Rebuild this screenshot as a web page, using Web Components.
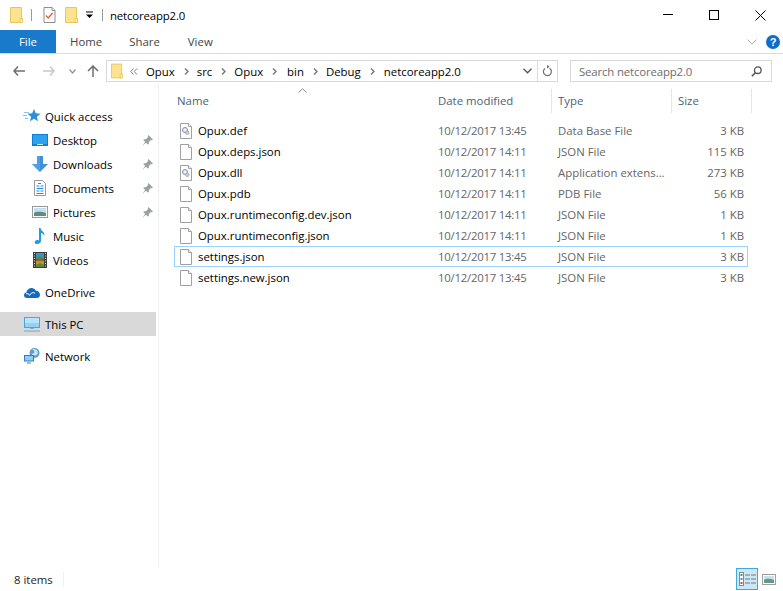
<!DOCTYPE html>
<html>
<head>
<meta charset="utf-8">
<title>netcoreapp2.0</title>
<style>
  html, body { margin: 0; padding: 0; background: #fff; }
  body { font: 11.4px "Open Sans", "Noto Sans", sans-serif; color: #000; overflow: hidden; }
</style>
</head>
<body>
<explorer-window></explorer-window>

<script>
// all the icons in one place, shadow roots just look them up by name
const folderIcon = (w, h) => `<svg width="${w}" height="${h}" viewBox="0 0 13 16"><path d="M.5.5h11v15H.5z" fill="#fde28f" stroke="#e9c65c"/><path d="M10 11.500h2.500v4H10z" fill="#fff3c9" stroke="#e9c65c"/></svg>`;
const pageBase = '<path d="M.5.5h8l3 3v12H.5z" fill="#fff" stroke="#a0a0a0"/><path d="M8.500.5v3h3" fill="#f4f4f4" stroke="#a0a0a0"/>';
const icons = {
  folder: folderIcon(13, 16),
  check: `<svg width="13" height="16" viewBox="0 0 12 16"><path d="M.5.5h8l3 3v12H.5z" fill="#fff" stroke="#8c8c8c"/><path d="M8.500.5v3h3" fill="#eee" stroke="#8c8c8c"/><path d="M2.500 8.500l2.200 2.500 4.500-5" fill="none" stroke="#e2622e" stroke-width="1.400"/></svg>`,
  page: `<svg width="12" height="16" viewBox="0 0 12 16">${pageBase}</svg>`,
  gear: `<svg width="12" height="16" viewBox="0 0 12 16">${pageBase}<circle cx="5" cy="7" r="2.600" fill="#d4dae0" stroke="#94a0ac"/><circle cx="5" cy="7" r=".9" fill="#fff"/><circle cx="7.300" cy="9.800" r="1.800" fill="#c8d0d8" stroke="#94a0ac" stroke-width=".7"/></svg>`,
  star: `<svg width="18" height="16" viewBox="0 0 18 16"><path d="M1 4.500h5M0 7.500h4M2 10.500h3" stroke="#8cc4ee" stroke-width="1"/><path d="M11 1l1.800 4.300 4.700.4-3.600 3 1.100 4.600-4-2.500-4 2.500 1.100-4.600-3.600-3 4.700-.4z" fill="#2b8fdc"/></svg>`,
  desktop: `<svg width="16" height="12" viewBox="0 0 16 12"><rect width="16" height="12" fill="#0f7fd6"/><rect x="1" y="1" width="14" height="9" fill="#2fa2ee"/><path d="M5 10.500h6" stroke="#cfe9fb"/></svg>`,
  downloads: `<svg width="16" height="16" viewBox="0 0 16 16"><path d="M5 0h6v8h5l-8 8-8-8h5z" fill="#3f8fdc"/><path d="M5 0h3v16L0 8h5z" fill="#5aa6ea" opacity=".7"/></svg>`,
  documents: `<svg width="12" height="16" viewBox="0 0 12 16"><path d="M.5.5h8l3 3v12H.5z" fill="#fff" stroke="#9a9a9a"/><path d="M4 3.500h3M2.500 6h3M6.500 6h3M2.500 8.500h7M2.500 11h3M6.500 11h3M2.500 13.500h7" stroke="#1f8fe6"/></svg>`,
  pictures: `<svg width="16" height="12" viewBox="0 0 16 12"><rect x=".5" y=".5" width="15" height="11" fill="#fff" stroke="#9a9a9a"/><rect x="2" y="2" width="12" height="8" fill="#c4dfef"/><path d="M2 7c3-2 8-1 12 0v3H2z" fill="#5f8f7c"/></svg>`,
  music: `<svg width="12" height="16" viewBox="0 0 12 16"><path d="M5 0h1.500c.4 3 4.500 3.500 4 8-.8-2-2.500-3-3.500-3v8c0 2-2 3-4 3S0 14.500 1 13.200 3.500 11.800 5 12.400z" fill="#1e9be8"/></svg>`,
  videos: `<svg width="14" height="16" viewBox="0 0 14 16"><rect width="14" height="16" fill="#3d3d3d"/><rect x="3" y="1" width="8" height="6.500" fill="#3f8fce"/><rect x="3" y="8.500" width="8" height="6.500" fill="#d98a2c"/><path d="M3 6l3-2 5 2v1.500H3zM3 13l4-2 4 2v2H3z" fill="#4f8f3c"/><path d="M1 1.500h1M1 4h1M1 6.500h1M1 9h1M1 11.500h1M1 14h1M12 1.500h1M12 4h1M12 6.500h1M12 9h1M12 11.500h1M12 14h1" stroke="#ddd"/></svg>`,
  onedrive: `<svg width="16" height="11" viewBox="0 0 16 11"><path d="M3 11C1 11 0 9.800 0 8.300S1 5.800 2.300 5.600C3 2.500 5.200 1 7.500 1c1.900 0 3.400 1 4.200 2.800 2.500-.2 4.300 1.700 4.300 4S14.500 11 13 11z" fill="#0f6cc0"/><path d="M2 6.800c1.500-.5 3 .2 3.600 1.600 1-2.600 3.500-3.300 5.500-2.300" fill="none" stroke="#fff" stroke-width="1"/></svg>`,
  pc: `<svg width="16" height="16" viewBox="0 0 16 16"><rect x=".5" y="1.500" width="15" height="10" fill="#8fd3f7" stroke="#4ba3e0"/><rect x="1" y="2" width="14" height="5" fill="#b7e4fb"/><path d="M6 12h4v1H6z" fill="#9ab"/><path d="M0 15h16" stroke="#8fb4d0" stroke-width="1.400"/></svg>`,
  network: `<svg width="16" height="16" viewBox="0 0 16 16"><circle cx="10.500" cy="5" r="5" fill="#5a9fd8"/><path d="M8 1.500c2 .5 3 2 2.500 3S8 5 8 7c2 .5 4 1 5.500-1 .5-1.500 0-3.500-1.500-4.500-1-.7-3-.7-4 0z" fill="#d4e6f2"/><rect x="0" y="7" width="10" height="6.500" fill="#2f7fc6"/><rect x="1" y="8" width="8" height="4.500" fill="#8fcdf3"/><path d="M3 15h4" stroke="#7fa0bc" stroke-width="1.400"/></svg>`,
  pin: `<svg width="11" height="11" viewBox="0 0 11 11"><path d="M6.500 0L11 4.500 9.800 5.200 8.800 5 6.800 7.200 6.800 9 5.800 9.600 1.400 5.200 2 4.200H3.800L6 2.200 5.800 1.200zM3.200 7L.3 10.700 4 7.800z" fill="#99a1a8"/></svg>`
};

const tpl = (css, html) => {
  const t = document.createElement('template');
  t.innerHTML = `<style>${css}</style>${html}`;
  return t;
};

class TitleBar extends HTMLElement {
  connectedCallback() {
    this.attachShadow({ mode: 'open' }).appendChild(tpl(`
      :host { display: flex; height: 30px; align-items: center; padding-left: 10px; }
      .sep { width: 1px; height: 12px; background: #9a9a9a; }
      .i { display: flex; }
      .grow { flex: 1; }
      .btn { width: 46px; height: 30px; display: flex; align-items: center; justify-content: center; }
      .drop { display: flex; }
      .title { margin-left: 7px; letter-spacing: -.15px; }
      svg { display: block; }
    `, `
      <span class="i">${icons.folder}</span>
      <span class="sep" style="margin-left:8px"></span>
      <span class="i" style="margin-left:11px">${icons.check}</span>
      <span class="i" style="margin-left:9px">${icons.folder}</span>
      <span class="drop" style="margin-left:8px"><svg width="8" height="8" viewBox="0 0 8 8"><path d="M0 1h7" stroke="#000"/><path d="M0 3.500h7L3.500 7z" fill="#000"/></svg></span>
      <span class="sep" style="margin-left:8px"></span>
      <span class="title">netcoreapp2.0</span>
      <span class="grow"></span>
      <span class="btn"><svg width="10" height="10" viewBox="0 0 10 10"><path d="M0 4.500h10" stroke="#000"/></svg></span>
      <span class="btn"><svg width="10" height="10" viewBox="0 0 10 10"><rect x=".5" y=".5" width="9" height="9" fill="none" stroke="#000"/></svg></span>
      <span class="btn"><svg width="11" height="11" viewBox="0 0 11 11"><path d="M.5.5l10 10M10.500.5l-10 10" stroke="#000" fill="none"/></svg></span>
    `).content.cloneNode(true));
  }
}

class RibbonTabs extends HTMLElement {
  connectedCallback() {
    this.attachShadow({ mode: 'open' }).appendChild(tpl(`
      :host { display: flex; height: 23px; align-items: stretch; border-bottom: 1px solid #dadbdc; color: #444; }
      .tab { display: flex; align-items: center; }
      .file { width: 56px; justify-content: center; background: #1979ca; color: #fff; }
      .grow { flex: 1; }
      .end { display: flex; align-items: center; }
    `, `
      <span class="tab file">File</span>
      <span class="tab" style="margin-left:14px">Home</span>
      <span class="tab" style="margin-left:27px">Share</span>
      <span class="tab" style="margin-left:28px">View</span>
      <span class="grow"></span>
      <span class="end">
        <svg width="10" height="6" viewBox="0 0 10 6"><path d="M.5.5L5 5 9.500.5" fill="none" stroke="#b4b4b4"/></svg>
        <svg style="margin-left:9px;margin-right:3px" width="14" height="14" viewBox="0 0 14 14"><circle cx="7" cy="7" r="7" fill="#0f6cc9"/><text x="7" y="11" text-anchor="middle" font-family="Liberation Sans" font-weight="700" font-size="11" fill="#fff">?</text></svg>
      </span>
    `).content.cloneNode(true));
  }
}

class AddressRow extends HTMLElement {
  connectedCallback() {
    const crumbs = ['Opux', 'src', 'Opux', 'bin', 'Debug', 'netcoreapp2.0'];
    const extra = [0, 0, 2, 0, 1];
    const sep = n => `<svg class="cs" style="margin-right:${8 + n}px" width="5" height="7" viewBox="0 0 5 7"><path d="M1 .5L4 3.500 1 6.500" fill="none" stroke="#7a7a7a" stroke-width="1.500"/></svg>`;
    this.attachShadow({ mode: 'open' }).appendChild(tpl(`
      :host { display: flex; height: 22px; margin-top: 6px; align-items: center; padding-left: 13px; }
      svg { display: block; flex: none; }
      .box { height: 20px; border: 1px solid #d9d9d9; display: flex; align-items: center; }
      .addr { margin-left: 7px; width: 450px; }
      .crumbs { display: flex; align-items: center; flex: 1; margin-left: 8px; }
      .cs { margin-left: 9px; }
      .rf { width: 19px; height: 20px; border-left: 1px solid #d9d9d9; display: flex; align-items: center; justify-content: center; }
      .search { margin-left: 12px; width: 200px; color: #6d6d6d; }
      .search span { flex: 1; margin-left: 8px; letter-spacing: -.15px; }
    `, `
      <svg width="12" height="10" viewBox="0 0 12 10"><path d="M5 .5L1 5l4 4.500M1 5h11" fill="none" stroke="#6d6d6d" stroke-width="1.500"/></svg>
      <svg style="margin-left:18px" width="12" height="10" viewBox="0 0 12 10"><path d="M7 .5L11 5 7 9.500M11 5H0" fill="none" stroke="#c8c8c8" stroke-width="1.500"/></svg>
      <svg style="margin-left:14px" width="7" height="5" viewBox="0 0 7 5"><path d="M.5 .5L3.500 4 6.500 .5" fill="none" stroke="#909090" stroke-width="1.200"/></svg>
      <svg style="margin-left:11px" width="12" height="12" viewBox="0 0 12 12"><path d="M1 6l5-5 5 5M6 1v11" fill="none" stroke="#6d6d6d" stroke-width="1.500"/></svg>
      <div class="box addr">
        <span style="display:flex;margin-left:4px">${folderIcon(12, 16)}</span>
        <svg style="margin-left:7px" width="8" height="7" viewBox="0 0 8 7"><path d="M3.500.5L.8 3.500 3.500 6.500M7 .5L4.300 3.500 7 6.500" fill="none" stroke="#7a7a7a"/></svg>
        <div class="crumbs">${crumbs.map((c, i) => `<span>${c}</span>${i < crumbs.length - 1 ? sep(extra[i]) : ''}`).join('')}</div>
        <svg width="9" height="6" viewBox="0 0 9 6"><path d="M.5.8L4.500 4.800 8.500.8" fill="none" stroke="#555" stroke-width="1.300"/></svg>
        <span style="width:5px"></span>
        <span class="rf"><svg width="11" height="12" viewBox="0 0 11 12"><path d="M5 1.500h2M7.500 3.200A4 4 0 1 1 3 3.400" fill="none" stroke="#6d6d6d" stroke-width="1.200"/><path d="M5 0v3.500L7.500 1.800z" fill="#6d6d6d"/></svg></span>
      </div>
      <div class="box search">
        <span>Search netcoreapp2.0</span>
        <svg style="margin-right:9px" width="11" height="11" viewBox="0 0 11 11"><circle cx="6.800" cy="4.200" r="3.300" fill="none" stroke="#555" stroke-width="1.300"/><path d="M4.300 6.700L.8 10.200" stroke="#555" stroke-width="1.600"/></svg>
      </div>
    `).content.cloneNode(true));
  }
}

class NavItem extends HTMLElement {
  connectedCallback() {
    const icon = this.getAttribute('icon');
    const sub = this.hasAttribute('sub');
    this.attachShadow({ mode: 'open' }).appendChild(tpl(`
      :host { display: flex; height: 24px; align-items: center; color: #000; }
      :host([selected]) { background: #d9d9d9; }
      .ic { width: 18px; display: flex; justify-content: center; margin-left: ${sub ? 31 : 23}px; }
      .txt { margin-left: 4px; flex: 1; }
      .pin { display: flex; margin-right: 3px; }
      svg { display: block; }
    `, `
      <span class="ic">${icons[icon]}</span>
      <span class="txt"><slot></slot></span>
      ${this.hasAttribute('pinned') ? `<span class="pin">${icons.pin}</span>` : ''}
    `).content.cloneNode(true));
  }
}

class NavPane extends HTMLElement {
  connectedCallback() {
    this.attachShadow({ mode: 'open' }).appendChild(tpl(`
      :host { display: block; width: 158px; border-right: 1px solid #f0f0f0; box-sizing: content-box; flex: none; padding-top: 20px; }
      .wrap { width: 156px; }
      .gap { height: 8px; }
    `, `
      <div class="wrap">
        <nav-item icon="star">Quick access</nav-item>
        <nav-item icon="desktop" sub pinned>Desktop</nav-item>
        <nav-item icon="downloads" sub pinned>Downloads</nav-item>
        <nav-item icon="documents" sub pinned>Documents</nav-item>
        <nav-item icon="pictures" sub pinned>Pictures</nav-item>
        <nav-item icon="music" sub>Music</nav-item>
        <nav-item icon="videos" sub>Videos</nav-item>
        <div class="gap"></div>
        <nav-item icon="onedrive">OneDrive</nav-item>
        <div class="gap"></div>
        <nav-item icon="pc" selected>This PC</nav-item>
        <div class="gap"></div>
        <nav-item icon="network">Network</nav-item>
      </div>
    `).content.cloneNode(true));
  }
}

class FileRow extends HTMLElement {
  connectedCallback() {
    const a = n => this.getAttribute(n);
    this.attachShadow({ mode: 'open' }).appendChild(tpl(`
      :host { display: grid; grid-template-columns: 263px 120px 120px 69px; height: 21px; box-sizing: border-box; align-items: center; border: 1px solid transparent; color: #666; }
      :host([focused]) { border-color: #99d1ff; }
      .name { display: flex; align-items: center; color: #000; padding-left: 5px; }
      .name svg { display: block; margin-right: 6px; }
      .date { letter-spacing: -.25px; }
      .size { text-align: right; padding-right: 3px; }
    `, `
      <span class="name">${icons[a('icon') || 'page']}${a('name')}</span>
      <span class="date">${a('date')}</span>
      <span>${a('type')}</span>
      <span class="size">${a('size')}</span>
    `).content.cloneNode(true));
  }
}

class FileList extends HTMLElement {
  connectedCallback() {
    this.attachShadow({ mode: 'open' }).appendChild(tpl(`
      :host { display: block; flex: 1; position: relative; }
      .head { display: grid; grid-template-columns: 261px 120px 120px 80px; margin: 5px 0 0 12px; height: 24px; color: #4c607a; width: 581px; }
      .head span { display: flex; align-items: center; padding: 0 0 2px 6px; border-right: 1px solid #e5e5e5; }
      .head span:first-child { border-right: 0; }
      .caret { position: absolute; left: 139px; top: 4px; }
      .rows { margin: 7px 0 0 15px; width: 574px; }
    `, `
      <svg class="caret" width="9" height="5" viewBox="0 0 9 5"><path d="M.5 4.500L4.500.8 8.500 4.500" fill="none" stroke="#8a8a8a"/></svg>
      <div class="head"><span>Name</span><span>Date modified</span><span>Type</span><span>Size</span></div>
      <div class="rows"><slot></slot></div>
    `).content.cloneNode(true));
  }
}

class StatusBar extends HTMLElement {
  connectedCallback() {
    this.attachShadow({ mode: 'open' }).appendChild(tpl(`
      :host { display: flex; height: 23px; align-items: center; padding-left: 14px; color: #1e1e1e; }
      .sep { width: 1px; height: 15px; background: #f0f0f0; margin-left: 10px; }
      .grow { flex: 1; }
      .on { width: 22px; height: 22px; align-self: flex-start; border: 1px solid #3ea8dd; background: #cce8f6; display: flex; align-items: center; justify-content: center; box-sizing: border-box; }
      .off { margin: 0 7px 0 4px; display: flex; }
    `, `
      <span>8 items</span>
      <span class="sep"></span>
      <span class="grow"></span>
      <span class="on"><svg width="17" height="14" viewBox="0 0 17 14"><rect x=".5" y=".5" width="4" height="13" fill="#fff" stroke="#888"/><path d="M1.500 2h2v2h-2z" fill="#5a8f7a"/><path d="M1.500 6h2v2h-2z" fill="#4a90e2"/><path d="M1.500 10h2v2h-2z" fill="#d8434a"/><path d="M6 3h5M12 3h5M6 7h5M12 7h5M6 11h5M12 11h5" stroke="#777"/></svg></span>
      <span class="off"><svg width="14" height="11" viewBox="0 0 14 11"><rect x=".5" y=".5" width="13" height="10" fill="#fff" stroke="#9f9f9f"/><rect x="2" y="2" width="10" height="7" fill="#c6e1f1"/><path d="M2 6c3-2 7-1 10 0v3H2z" fill="#6a9686"/></svg></span>
    `).content.cloneNode(true));
  }
}

class ExplorerWindow extends HTMLElement {
  connectedCallback() {
    const files = [
      ['gear', 'Opux.def', '10/12/2017 13:45', 'Data Base File', '3 KB'],
      ['page', 'Opux.deps.json', '10/12/2017 14:11', 'JSON File', '115 KB'],
      ['gear', 'Opux.dll', '10/12/2017 14:11', 'Application extens...', '273 KB'],
      ['page', 'Opux.pdb', '10/12/2017 14:11', 'PDB File', '56 KB'],
      ['page', 'Opux.runtimeconfig.dev.json', '10/12/2017 14:11', 'JSON File', '1 KB'],
      ['page', 'Opux.runtimeconfig.json', '10/12/2017 14:11', 'JSON File', '1 KB'],
      ['page', 'settings.json', '10/12/2017 13:45', 'JSON File', '3 KB', true],
      ['page', 'settings.new.json', '10/12/2017 13:45', 'JSON File', '3 KB']
    ];
    this.attachShadow({ mode: 'open' }).appendChild(tpl(`
      :host { display: flex; flex-direction: column; width: 783px; height: 591px; background: #fff; }
      .body { display: flex; flex: 1; margin-top: 2px; min-height: 0; }
    `, `
      <title-bar></title-bar>
      <ribbon-tabs></ribbon-tabs>
      <address-row></address-row>
      <div class="body">
        <nav-pane></nav-pane>
        <file-list>
          ${files.map(f => `<file-row icon="${f[0]}" name="${f[1]}" date="${f[2]}" type="${f[3]}" size="${f[4]}"${f[5] ? ' focused' : ''}></file-row>`).join('')}
        </file-list>
      </div>
      <status-bar></status-bar>
    `).content.cloneNode(true));
  }
}

customElements.define('title-bar', TitleBar);
customElements.define('ribbon-tabs', RibbonTabs);
customElements.define('address-row', AddressRow);
customElements.define('nav-item', NavItem);
customElements.define('nav-pane', NavPane);
customElements.define('file-row', FileRow);
customElements.define('file-list', FileList);
customElements.define('status-bar', StatusBar);
customElements.define('explorer-window', ExplorerWindow);
</script>
</body>
</html>
